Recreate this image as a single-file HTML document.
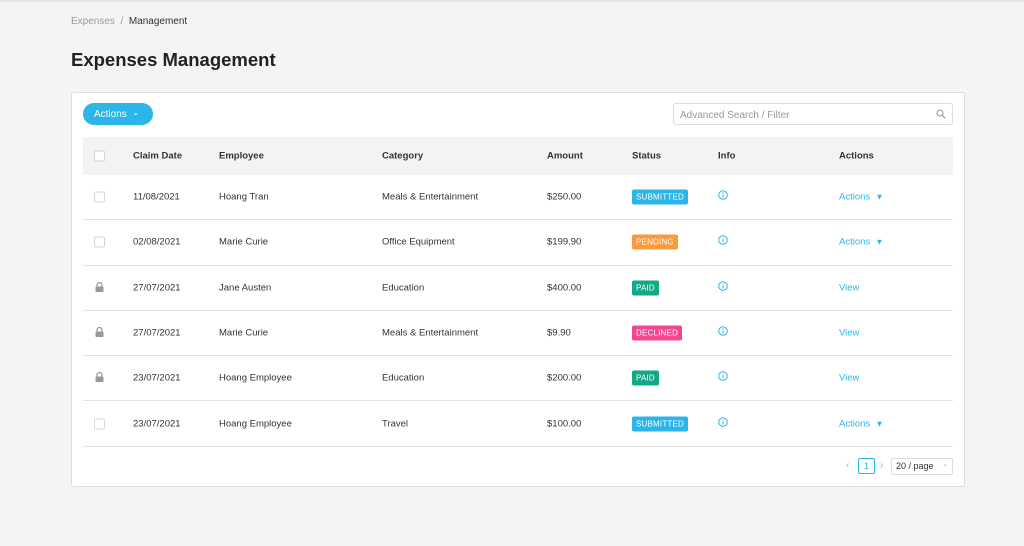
<!DOCTYPE html>
<html><head><meta charset="utf-8"><style>
*{box-sizing:border-box;margin:0;padding:0}
body{width:1024px;height:546px;background:#f4f4f4;font-family:"Liberation Sans",sans-serif;color:#333;position:relative;overflow:hidden}
.a{position:absolute}
.crumb{left:71px;top:16px;font-size:10px;color:#999}
.crumb b{font-weight:normal;color:#333}
h1{position:absolute;left:71px;top:49px;font-size:18.5px;font-weight:bold;color:#222}
.card{left:71px;top:92px;width:894px;height:395px;background:#fff;border:1px solid #ddd;border-radius:3px}
.btn{left:11px;top:10px;width:70px;height:22px;background:#2bb5e8;border-radius:11px;color:#fff;font-size:10px;line-height:24px;padding-left:11px}
.search{left:601px;top:10px;width:280px;height:22px;border:1px solid #ddd;border-radius:3px;font-size:10px;color:#999;line-height:23px;padding-left:6px}
.thead{left:11px;top:44px;width:870px;height:38px;background:#f2f3f5}
.row{left:11px;width:870px;height:45.3px;border-bottom:1px solid #e4e4e4}
.c{position:absolute;font-size:9.5px;top:50%;transform:translateY(-50%);white-space:nowrap}
.th{font-weight:bold;color:#333}
.cb{width:11px;height:11px;border:1px solid #d5d5d5;border-radius:2px;background:#fff}
.tag{color:#fff;font-size:8px;padding:3px 4px;border-radius:2px;letter-spacing:.2px}
.blue{color:#2bb5e8}
</style></head><body>
<div class="a" style="left:0;top:0;width:1024px;height:2px;background:#e4e4e4"></div>
<div class="a crumb">Expenses &nbsp;/&nbsp; <b>Management</b></div>
<h1>Expenses Management</h1>
<div class="a card">
<div class="a btn">Actions &nbsp;<span style="font-size:8px;position:relative;top:-2px">&#8964;</span></div>
<div class="a search">Advanced Search / Filter
<svg class="a" style="right:6px;top:5px" width="10" height="10" viewBox="0 0 10 10"><circle cx="4" cy="4" r="3" fill="none" stroke="#999" stroke-width="1.1"/><path d="M6.2 6.2L9.3 9.3" stroke="#999" stroke-width="1.2"/></svg></div>
<div class="a thead">
<div class="c cb" style="left:11px"></div>
<div class="c th" style="left:50px">Claim Date</div>
<div class="c th" style="left:136px">Employee</div>
<div class="c th" style="left:299px">Category</div>
<div class="c th" style="left:464px">Amount</div>
<div class="c th" style="left:549px">Status</div>
<div class="c th" style="left:635px">Info</div>
<div class="c th" style="left:756px">Actions</div>
</div>
<div class="a row" style="top:82px">
<div class="c cb" style="left:11px"></div>
<div class="c" style="left:50px">11/08/2021</div><div class="c" style="left:136px">Hoang Tran</div><div class="c" style="left:299px">Meals &amp; Entertainment</div><div class="c" style="left:464px">$250.00</div>
<div class="c tag" style="left:549px;background:#2bb5e8">SUBMITTED</div>
<svg class="c" style="left:635px;margin-top:-2px" width="10" height="10" viewBox="0 0 10 10"><circle cx="5" cy="5" r="4.3" fill="none" stroke="#2bb5e8"/><path d="M5 4.3V7.5M5 2.5v1" stroke="#2bb5e8"/></svg>
<div class="c blue" style="left:756px">Actions &nbsp;<span style="font-size:8px">&#9660;</span></div></div>
<div class="a row" style="top:127.3px">
<div class="c cb" style="left:11px"></div>
<div class="c" style="left:50px">02/08/2021</div><div class="c" style="left:136px">Marie Curie</div><div class="c" style="left:299px">Office Equipment</div><div class="c" style="left:464px">$199.90</div>
<div class="c tag" style="left:549px;background:#fb9a3c">PENDING</div>
<svg class="c" style="left:635px;margin-top:-2px" width="10" height="10" viewBox="0 0 10 10"><circle cx="5" cy="5" r="4.3" fill="none" stroke="#2bb5e8"/><path d="M5 4.3V7.5M5 2.5v1" stroke="#2bb5e8"/></svg>
<div class="c blue" style="left:756px">Actions &nbsp;<span style="font-size:8px">&#9660;</span></div></div>
<div class="a row" style="top:172.6px">
<svg class="c" style="left:12px;margin-top:-1px" width="9" height="10" viewBox="0 0 9 10"><path d="M2 4.5V3a2.5 2.5 0 015 0v1.5" fill="none" stroke="#999" stroke-width="1.2"/><rect x="0.5" y="4.5" width="8" height="5.5" rx="1" fill="#999"/></svg>
<div class="c" style="left:50px">27/07/2021</div><div class="c" style="left:136px">Jane Austen</div><div class="c" style="left:299px">Education</div><div class="c" style="left:464px">$400.00</div>
<div class="c tag" style="left:549px;background:#13a987">PAID</div>
<svg class="c" style="left:635px;margin-top:-2px" width="10" height="10" viewBox="0 0 10 10"><circle cx="5" cy="5" r="4.3" fill="none" stroke="#2bb5e8"/><path d="M5 4.3V7.5M5 2.5v1" stroke="#2bb5e8"/></svg>
<div class="c blue" style="left:756px">View</div></div>
<div class="a row" style="top:217.9px">
<svg class="c" style="left:12px;margin-top:-1px" width="9" height="10" viewBox="0 0 9 10"><path d="M2 4.5V3a2.5 2.5 0 015 0v1.5" fill="none" stroke="#999" stroke-width="1.2"/><rect x="0.5" y="4.5" width="8" height="5.5" rx="1" fill="#999"/></svg>
<div class="c" style="left:50px">27/07/2021</div><div class="c" style="left:136px">Marie Curie</div><div class="c" style="left:299px">Meals &amp; Entertainment</div><div class="c" style="left:464px">$9.90</div>
<div class="c tag" style="left:549px;background:#f5468f">DECLINED</div>
<svg class="c" style="left:635px;margin-top:-2px" width="10" height="10" viewBox="0 0 10 10"><circle cx="5" cy="5" r="4.3" fill="none" stroke="#2bb5e8"/><path d="M5 4.3V7.5M5 2.5v1" stroke="#2bb5e8"/></svg>
<div class="c blue" style="left:756px">View</div></div>
<div class="a row" style="top:263.2px">
<svg class="c" style="left:12px;margin-top:-1px" width="9" height="10" viewBox="0 0 9 10"><path d="M2 4.5V3a2.5 2.5 0 015 0v1.5" fill="none" stroke="#999" stroke-width="1.2"/><rect x="0.5" y="4.5" width="8" height="5.5" rx="1" fill="#999"/></svg>
<div class="c" style="left:50px">23/07/2021</div><div class="c" style="left:136px">Hoang Employee</div><div class="c" style="left:299px">Education</div><div class="c" style="left:464px">$200.00</div>
<div class="c tag" style="left:549px;background:#13a987">PAID</div>
<svg class="c" style="left:635px;margin-top:-2px" width="10" height="10" viewBox="0 0 10 10"><circle cx="5" cy="5" r="4.3" fill="none" stroke="#2bb5e8"/><path d="M5 4.3V7.5M5 2.5v1" stroke="#2bb5e8"/></svg>
<div class="c blue" style="left:756px">View</div></div>
<div class="a row" style="top:308.5px">
<div class="c cb" style="left:11px"></div>
<div class="c" style="left:50px">23/07/2021</div><div class="c" style="left:136px">Hoang Employee</div><div class="c" style="left:299px">Travel</div><div class="c" style="left:464px">$100.00</div>
<div class="c tag" style="left:549px;background:#2bb5e8">SUBMITTED</div>
<svg class="c" style="left:635px;margin-top:-2px" width="10" height="10" viewBox="0 0 10 10"><circle cx="5" cy="5" r="4.3" fill="none" stroke="#2bb5e8"/><path d="M5 4.3V7.5M5 2.5v1" stroke="#2bb5e8"/></svg>
<div class="c blue" style="left:756px">Actions &nbsp;<span style="font-size:8px">&#9660;</span></div></div>
<div class="a" style="left:774px;top:367px;font-size:10px;color:#aaa">&lsaquo;</div>
<div class="a" style="left:786px;top:365px;width:17px;height:16px;border:1px solid #2bb5e8;border-radius:2px;color:#2bb5e8;font-size:9px;text-align:center;line-height:14px">1</div>
<div class="a" style="left:808px;top:367px;font-size:10px;color:#aaa">&rsaquo;</div>
<div class="a" style="left:819px;top:365px;width:62px;height:17px;border:1px solid #ddd;border-radius:2px;font-size:9px;line-height:15px;padding-left:4px">20 / page<span style="position:absolute;right:4px;top:-2px;color:#aaa;font-size:7px">&#8964;</span></div>
</div>
</body></html>
